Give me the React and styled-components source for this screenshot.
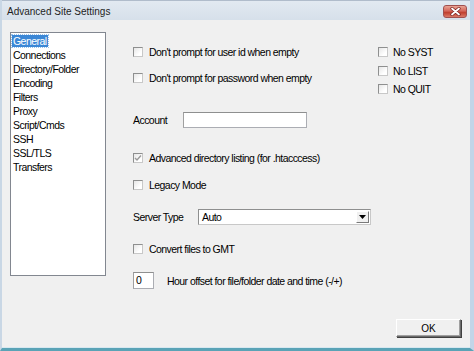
import React, { useState } from "react";
import styled, { createGlobalStyle } from "styled-components";

const GlobalStyle = createGlobalStyle`
  html, body {
    margin: 0;
    padding: 0;
    background: #f0f0f0;
  }
  * {
    box-sizing: border-box;
  }
`;

const pages = [
  "General",
  "Connections",
  "Directory/Folder",
  "Encoding",
  "Filters",
  "Proxy",
  "Script/Cmds",
  "SSH",
  "SSL/TLS",
  "Transfers",
];

function CheckBox({ checked, disabled }) {
  return (
    <Box>
      {checked && (
        <svg width="8" height="8" viewBox="0 0 8 8">
          <path
            d="M1 4 L3 6 L7 1.5"
            fill="none"
            stroke={disabled ? "#9a9a9a" : "#222"}
            strokeWidth="1.4"
          />
        </svg>
      )}
    </Box>
  );
}

function Option({ label, checked, disabled, mt }) {
  return (
    <Row $mt={mt}>
      <CheckBox checked={checked} disabled={disabled} />
      <Label $gap={6}>{label}</Label>
    </Row>
  );
}

export default function App() {
  const [page, setPage] = useState("General");

  return (
    <>
      <GlobalStyle />
      <Window>
        <TitleBar>
          <Title>Advanced Site Settings</Title>
          <CloseBtn>
            <svg width="11" height="9" viewBox="0 0 11 9">
              <path
                d="M2 1.5 L9 7.5 M9 1.5 L2 7.5"
                stroke="#7a2020"
                strokeWidth="3.2"
                strokeLinecap="round"
              />
              <path
                d="M2 1.5 L9 7.5 M9 1.5 L2 7.5"
                stroke="#fff"
                strokeWidth="1.8"
                strokeLinecap="round"
              />
            </svg>
          </CloseBtn>
        </TitleBar>
        <Body>
          <Content>
            <PageList>
              {pages.map((p) => (
                <PageItem key={p} onClick={() => setPage(p)}>
                  <PageText $active={page === p}>{p}</PageText>
                </PageItem>
              ))}
            </PageList>
            <Settings>
              <Top>
                <Column>
                  <Option label="Don't prompt for user id when empty" mt={0} />
                  <Option label="Don't prompt for password when empty" mt={6} />
                </Column>
                <SideColumn>
                  <SmallOption>
                    <CheckBox />
                    <Label $gap={5}>No SYST</Label>
                  </SmallOption>
                  <SmallOption>
                    <CheckBox />
                    <Label $gap={5}>No LIST</Label>
                  </SmallOption>
                  <SmallOption>
                    <CheckBox />
                    <Label $gap={5}>No QUIT</Label>
                  </SmallOption>
                </SideColumn>
              </Top>
              <Row $mt={11}>
                <FieldLabel $w={50}>Account</FieldLabel>
                <TextInput $w={124} />
              </Row>
              <Option label="Advanced directory listing (for .htacccess)" checked disabled mt={18} />
              <Option label="Legacy Mode" mt={7} />
              <Row $mt={12}>
                <FieldLabel $w={65}>Server Type</FieldLabel>
                <Select>
                  <SelectValue>Auto</SelectValue>
                  <DropBtn>
                    <svg width="7" height="4" viewBox="0 0 7 4">
                      <path d="M0 0 H7 L3.5 4 Z" fill="#000" />
                    </svg>
                  </DropBtn>
                </Select>
              </Row>
              <Option label="Convert files to GMT" mt={12} />
              <Row $mt={12}>
                <TextInput $w={21} $h={17}>0</TextInput>
                <Label $gap={13}>Hour offset for file/folder date and time (-/+)</Label>
              </Row>
            </Settings>
          </Content>
          <Footer>
            <Button>OK</Button>
          </Footer>
        </Body>
      </Window>
    </>
  );
}

const Window = styled.div`
  width: 474px;
  height: 351px;
  display: flex;
  flex-direction: column;
  background: #f0f0f0;
  border-left: 2px solid #c9d7e5;
  border-right: 4px solid #c2d5e8;
  border-bottom: 3px solid #5aa3b6;
  font-family: "Liberation Sans", Arial, sans-serif;
  font-size: 10.5px;
  letter-spacing: -0.55px;
  color: #000;
  overflow: hidden;
`;

const TitleBar = styled.div`
  height: 20px;
  flex: none;
  display: flex;
  align-items: center;
  justify-content: space-between;
  padding: 0 3px 0 5px;
  background: linear-gradient(#e2e9f1, #d6e0ea);
  border-top: 1px solid #b0bccb;
`;

const Title = styled.div`
  font-size: 10px;
  letter-spacing: 0;
  color: #1e1e1e;
  margin-top: 1px;
`;

const CloseBtn = styled.div`
  width: 24px;
  height: 13px;
  margin-top: 1px;
  border-radius: 3px;
  border: 1px solid #a05050;
  background: linear-gradient(#eaa494, #d4665a 45%, #c0402f 60%, #dc7a68);
  display: flex;
  align-items: center;
  justify-content: center;
`;

const Body = styled.div`
  flex: 1;
  display: flex;
  flex-direction: column;
  border-bottom: 1px solid #d8e8f0;
`;

const Content = styled.div`
  flex: 1;
  display: flex;
  padding: 12px 0 0 8px;
`;

const PageList = styled.div`
  width: 96px;
  height: 244px;
  background: #fff;
  border: 1px solid #828790;
  padding: 1px 1px;
  display: flex;
  flex-direction: column;
`;

const PageItem = styled.div`
  height: 14px;
  display: flex;
  align-items: center;
  cursor: default;
`;

const PageText = styled.span`
  padding: 0 1px;
  line-height: 12px;
  background: ${(p) => (p.$active ? "#3b87d6" : "transparent")};
  color: ${(p) => (p.$active ? "#fff" : "#000")};
  outline: ${(p) => (p.$active ? "1px dotted #9ac2ea" : "none")};
`;

const Settings = styled.div`
  display: flex;
  flex-direction: column;
  padding: 10px 0 0 27px;
`;

const Top = styled.div`
  display: flex;
`;

const Column = styled.div`
  display: flex;
  flex-direction: column;
  width: 245px;
`;

const SideColumn = styled.div`
  display: flex;
  flex-direction: column;
  margin-top: 1px;
`;

const Row = styled.div`
  height: 20px;
  margin-top: ${(p) => p.$mt}px;
  display: flex;
  align-items: center;
  white-space: nowrap;
`;

const SmallOption = styled.div`
  height: 18.5px;
  display: flex;
  align-items: center;
  white-space: nowrap;
`;

const Box = styled.div`
  width: 10px;
  height: 10px;
  flex: none;
  background: linear-gradient(135deg, #e6e6e6, #ffffff 70%);
  border: 1px solid #8e8f8f;
  border-right-color: #c8c8c8;
  border-bottom-color: #c8c8c8;
  display: flex;
  align-items: center;
  justify-content: center;
`;

const Label = styled.span`
  margin-left: ${(p) => p.$gap}px;
`;

const FieldLabel = styled.span`
  width: ${(p) => p.$w}px;
  flex: none;
`;

const TextInput = styled.div`
  width: ${(p) => p.$w}px;
  height: ${(p) => p.$h || 16}px;
  flex: none;
  background: #fff;
  border: 1px solid #abadb3;
  border-top-color: #8e8f8f;
  border-left-color: #a0a0a0;
  padding-left: 2px;
  line-height: 14px;
`;

const Select = styled.div`
  width: 173px;
  height: 16px;
  display: flex;
  background: #fff;
  border: 1px solid #8e8f8f;
  border-right-color: #c8c8c8;
  border-bottom-color: #c8c8c8;
`;

const SelectValue = styled.span`
  flex: 1;
  padding-left: 3px;
  line-height: 14px;
`;

const DropBtn = styled.div`
  width: 13px;
  height: 12px;
  margin: 1px;
  background: #f0f0f0;
  border: 1px solid #fff;
  border-right-color: #7a7a7a;
  border-bottom-color: #7a7a7a;
  display: flex;
  align-items: center;
  justify-content: center;
`;

const Footer = styled.div`
  display: flex;
  justify-content: flex-end;
  padding: 0 9px 10px 0;
`;

const Button = styled.div`
  width: 65px;
  height: 18px;
  display: flex;
  align-items: center;
  justify-content: center;
  background: #f0f0f0;
  border: 1px solid #fff;
  border-right-color: #6a6a6a;
  border-bottom-color: #6a6a6a;
  box-shadow: 1px 1px 0 #404040, inset -1px -1px 0 #a0a0a0;
  font-size: 10px;
  letter-spacing: 0;
`;
